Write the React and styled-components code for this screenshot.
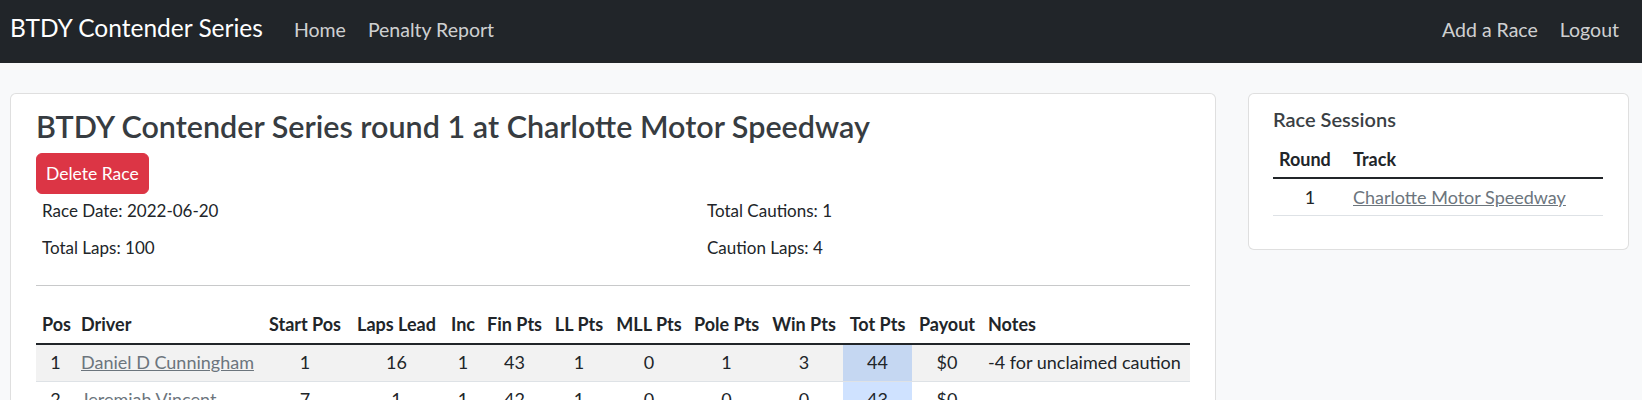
import React from "react";
import styled, { createGlobalStyle } from "styled-components";

const GlobalStyle = createGlobalStyle`
  html, body {
    margin: 0;
    padding: 0;
  }
  body {
    background: #f8f9fa;
    font-family: Lato, "Open Sans", "Liberation Sans", sans-serif;
    font-size: 18px;
    line-height: 1.5;
    color: #212529;
  }
`;

const Navbar = styled.nav`
  display: flex;
  align-items: baseline;
  height: 63px;
  box-sizing: border-box;
  padding: 10px 12px 0 10px;
  background: #212529;
`;

const Brand = styled.a`
  color: #ffffff;
  font-size: 24.5px;
  margin-right: 20px;
  text-decoration: none;
`;

const NavGroup = styled.div`
  display: flex;
  align-items: baseline;
  margin-left: ${(p) => (p.$end ? "auto" : "0")};
`;

const NavLink = styled.a`
  color: rgba(255, 255, 255, 0.8);
  font-size: 19.5px;
  padding: 0 11px;
  text-decoration: none;
`;

const Page = styled.div`
  display: flex;
  align-items: flex-start;
  gap: 32px;
  padding: 30px 13px 0 10px;
`;

const Card = styled.div`
  background: #ffffff;
  border: 1px solid rgba(0, 0, 0, 0.125);
  border-radius: 6px;
  box-sizing: border-box;
  flex: ${(p) => (p.$side ? "0 0 381px" : "1 1 auto")};
  padding: ${(p) => (p.$side ? "13px 25px 15px 24px" : "14px 25px 20px 25px")};
`;

const Title = styled.h3`
  margin: 0 0 7px;
  font-size: 30.5px;
  font-weight: 600;
  line-height: 1.24;
  color: #373c41;
`;

const SideTitle = styled.h5`
  margin: 0 0 10px;
  font-size: 20px;
  font-weight: 600;
  line-height: 1.2;
  color: #3a3f44;
`;

const DangerButton = styled.button`
  font-family: inherit;
  font-size: 17.5px;
  line-height: 27px;
  color: #ffffff;
  background: #dc3545;
  border: 1px solid #dc3545;
  border-radius: 6px;
  padding: 6px 9px;
  cursor: pointer;
`;

const InfoGrid = styled.div`
  display: grid;
  grid-template-columns: 665px 1fr;
  row-gap: 10px;
  padding-top: 3px;
  font-size: 17px;
  line-height: 27px;
`;

const InfoItem = styled.div`
  padding-left: 6px;
`;

const Rule = styled.hr`
  margin: 24px 0 21px;
  border: 0;
  border-top: 1px solid #c8c9ca;
`;

const Table = styled.table`
  width: 100%;
  table-layout: fixed;
  border-collapse: collapse;
  margin-bottom: 18px;
`;

const Th = styled.th`
  padding: 4.5px 6px;
  font-weight: 700;
  text-align: ${(p) => p.$align || "center"};
  border-bottom: 2px solid #212529;
  white-space: nowrap;
`;

const Row = styled.tr`
  background: ${(p) => (p.$striped ? "#f2f2f2" : "#ffffff")};
`;

const Td = styled.td`
  padding: 4.5px 6px;
  text-align: ${(p) => p.$align || "center"};
  border-bottom: 1px solid #dee2e6;
  white-space: nowrap;
  background: ${(p) =>
    p.$primary ? (p.$striped ? "#c5d7f2" : "#cfe2ff") : "transparent"};
`;

const TextLink = styled.a`
  color: #6c757d;
  text-decoration: underline;
`;

const columns = [
  { key: "pos", label: "Pos", width: 39 },
  { key: "driver", label: "Driver", width: 187, align: "left" },
  { key: "start", label: "Start Pos", width: 86 },
  { key: "lead", label: "Laps Lead", width: 97 },
  { key: "inc", label: "Inc", width: 36 },
  { key: "fin", label: "Fin Pts", width: 67 },
  { key: "ll", label: "LL Pts", width: 62 },
  { key: "mll", label: "MLL Pts", width: 78 },
  { key: "pole", label: "Pole Pts", width: 77 },
  { key: "win", label: "Win Pts", width: 78 },
  { key: "tot", label: "Tot Pts", width: 69, primary: true },
  { key: "payout", label: "Payout", width: 70 },
  { key: "notes", label: "Notes", align: "left" },
];

const results = [
  { pos: 1, driver: "Daniel D Cunningham", start: 1, lead: 16, inc: 1, fin: 43, ll: 1, mll: 0, pole: 1, win: 3, tot: 44, payout: "$0", notes: "-4 for unclaimed caution" },
  { pos: 2, driver: "Jeremiah Vincent", start: 7, lead: 1, inc: 1, fin: 42, ll: 1, mll: 0, pole: 0, win: 0, tot: 43, payout: "$0", notes: "" },
  { pos: 3, driver: "Chris Hampton", start: 3, lead: 0, inc: 2, fin: 41, ll: 0, mll: 0, pole: 0, win: 0, tot: 41, payout: "$0", notes: "" },
];

function ResultsTable() {
  return (
    <Table>
      <colgroup>
        {columns.map((c) => (
          <col key={c.key} style={c.width ? { width: c.width } : undefined} />
        ))}
      </colgroup>
      <thead>
        <tr>
          {columns.map((c) => (
            <Th key={c.key} $align={c.align}>{c.label}</Th>
          ))}
        </tr>
      </thead>
      <tbody>
        {results.map((r, i) => (
          <Row key={r.pos} $striped={i % 2 === 0}>
            {columns.map((c) => (
              <Td key={c.key} $align={c.align} $primary={c.primary} $striped={i % 2 === 0}>
                {c.key === "driver" ? <TextLink href="#">{r.driver}</TextLink> : r[c.key]}
              </Td>
            ))}
          </Row>
        ))}
      </tbody>
    </Table>
  );
}

function SessionsTable() {
  return (
    <Table>
      <colgroup>
        <col style={{ width: 74 }} />
        <col />
      </colgroup>
      <thead>
        <tr>
          <Th $align="left">Round</Th>
          <Th $align="left">Track</Th>
        </tr>
      </thead>
      <tbody>
        <tr>
          <Td>1</Td>
          <Td $align="left">
            <TextLink href="#">Charlotte Motor Speedway</TextLink>
          </Td>
        </tr>
      </tbody>
    </Table>
  );
}

export default function App() {
  return (
    <>
      <GlobalStyle />
      <Navbar>
        <Brand href="#">BTDY Contender Series</Brand>
        <NavGroup>
          <NavLink href="#">Home</NavLink>
          <NavLink href="#">Penalty Report</NavLink>
        </NavGroup>
        <NavGroup $end>
          <NavLink href="#">Add a Race</NavLink>
          <NavLink href="#">Logout</NavLink>
        </NavGroup>
      </Navbar>
      <Page>
        <Card>
          <Title>BTDY Contender Series round 1 at Charlotte Motor Speedway</Title>
          <DangerButton>Delete Race</DangerButton>
          <InfoGrid>
            <InfoItem>Race Date: 2022-06-20</InfoItem>
            <InfoItem>Total Cautions: 1</InfoItem>
            <InfoItem>Total Laps: 100</InfoItem>
            <InfoItem>Caution Laps: 4</InfoItem>
          </InfoGrid>
          <Rule />
          <ResultsTable />
        </Card>
        <Card $side>
          <SideTitle>Race Sessions</SideTitle>
          <SessionsTable />
        </Card>
      </Page>
    </>
  );
}
